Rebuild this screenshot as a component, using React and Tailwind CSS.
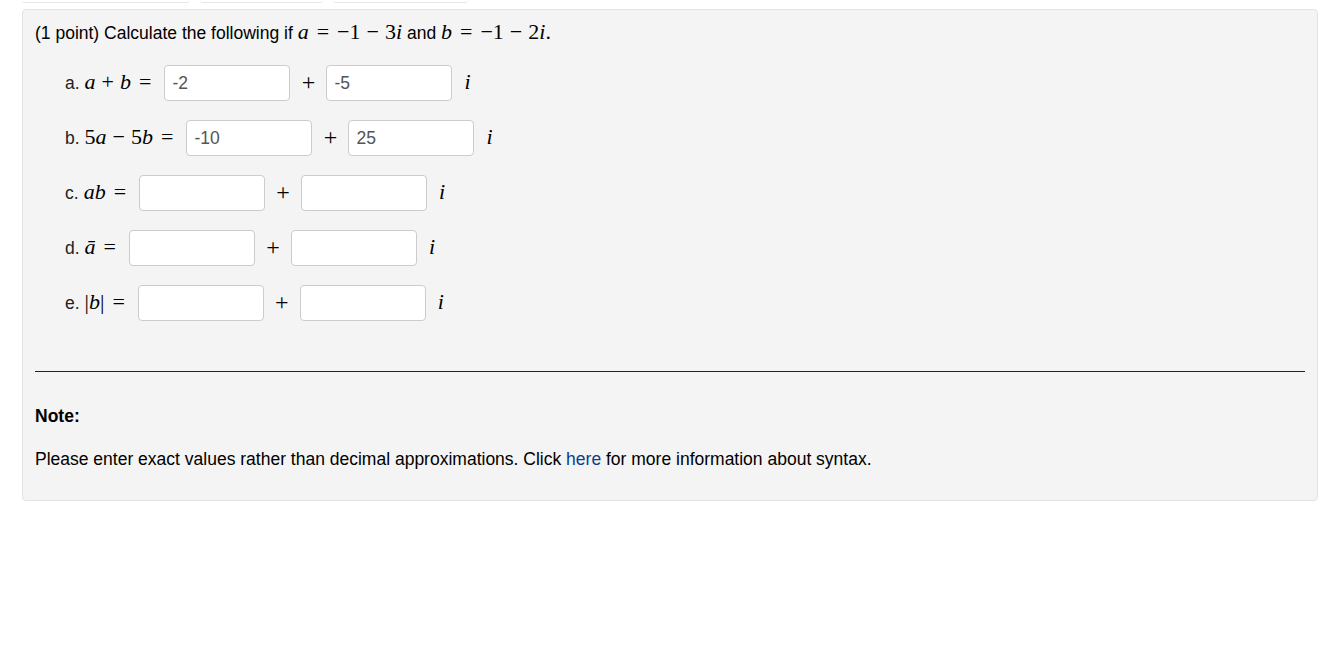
import React from 'react';

const SANS = "font-['Liberation_Sans',Arial,sans-serif]";

// math helpers, roughly MathJax spacing
const M = ({ children }) => (
  <span className="font-['Liberation_Serif','Times_New_Roman',serif] text-[22px] text-black whitespace-nowrap">{children}</span>
);
const V = ({ children }) => <span className="italic">{children}</span>;
const Rel = ({ c }) => <span className="mx-[8px]">{c}</span>;
const Bin = ({ c }) => <span className="mx-[6px]">{c}</span>;

const Box = ({ value = '' }) => (
  <input
    readOnly
    value={value}
    className={`w-[126px] h-[36px] border border-[#cccccc] rounded-[4px] bg-white px-[7px] text-[17.5px] text-[#555555] outline-none ${SANS}`}
  />
);

const Row = ({ label, math, re, im }) => (
  <div className="flex items-center h-[36px]">
    <span className="text-[17.5px] text-[#222]">{label}</span>
    <span className="ml-[5px] -mt-[3px]">{math}</span>
    <span className="ml-[5px]"><Box value={re} /></span>
    <span className="mx-[11px] w-[14px] flex justify-center font-['Liberation_Serif',serif] text-[24px] leading-none pb-[2px]">+</span>
    <Box value={im} />
    <span className="ml-[12px] -mt-[3px]"><M><V>i</V></M></span>
  </div>
);

export default function App() {
  const rows = [
    { label: 'a.', math: <M><V>a</V><Bin c="+" /><V>b</V><Rel c="=" /></M>, re: '-2', im: '-5' },
    { label: 'b.', math: <M>5<V>a</V><Bin c="−" />5<V>b</V><Rel c="=" /></M>, re: '-10', im: '25' },
    { label: 'c.', math: <M><V>ab</V><Rel c="=" /></M>, re: '', im: '' },
    { label: 'd.', math: <M><V>ā</V><Rel c="=" /></M>, re: '', im: '' },
    { label: 'e.', math: <M>|<V>b</V>|<Rel c="=" /></M>, re: '', im: '' },
  ];

  return (
    <div className={`min-h-[648px] bg-white ${SANS} text-black`}>
      {/* faint bits of the buttons above */}
      <div className="flex gap-[10px] pl-[22px] h-[3px]">
        <div className="w-[168px] border-b border-[#e6e6e6] rounded-b" />
        <div className="w-[123px] border-b border-[#e6e6e6] rounded-b" />
        <div className="w-[135px] border-b border-[#e6e6e6] rounded-b" />
      </div>

      <div className="ml-[22px] mt-[6px] w-[1296px] bg-[#f4f4f4] border border-[#e3e3e3] rounded-[4px] px-[12px] pt-[11px] pb-[30px]">
        <p className="text-[17.5px] leading-[22px]">
          (1 point) Calculate the following if{' '}
          <M><V>a</V><Rel c="=" />−1<Bin c="−" />3<V>i</V></M>{' '}
          and{' '}
          <M><V>b</V><Rel c="=" />−1<Bin c="−" />2<V>i</V>.</M>
        </p>

        <div className="mt-[21px] pl-[30px] flex flex-col gap-[19px]">
          {rows.map((r, i) => (
            <Row key={i} {...r} />
          ))}
        </div>

        <hr className="mt-[50px] border-0 border-t border-[#222]" />

        <p className="mt-[33px] text-[17.5px] leading-[22px] font-bold">Note:</p>
        <p className="mt-[21px] text-[17.5px] leading-[22px]">
          Please enter exact values rather than decimal approximations. Click{' '}
          <a className="text-[#0b3d91]">here</a> for more information about syntax.
        </p>
      </div>
    </div>
  );
}
